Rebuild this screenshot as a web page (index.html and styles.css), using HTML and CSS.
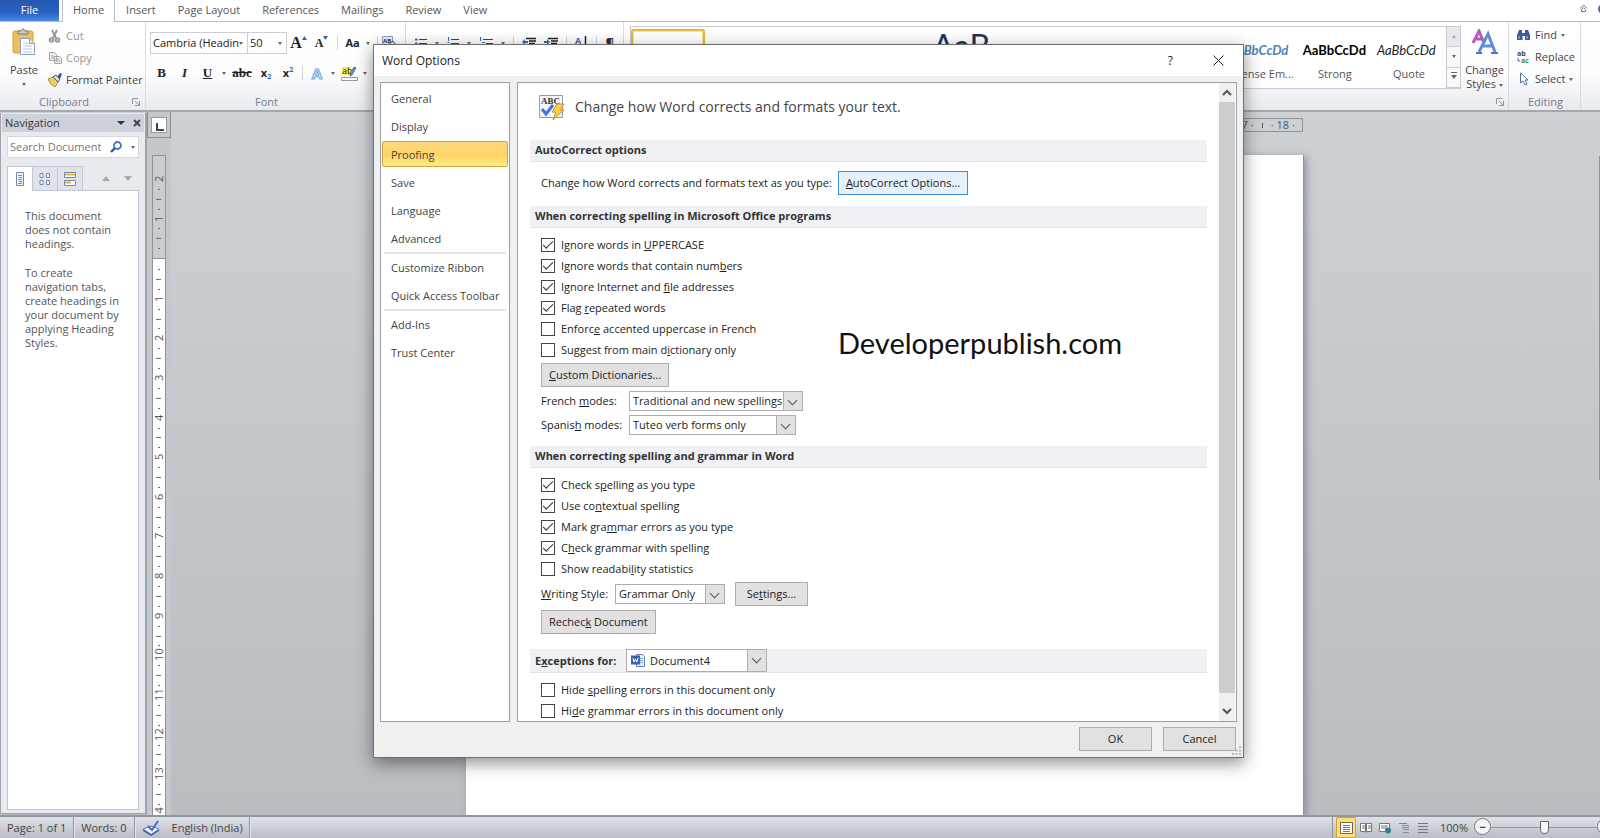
FILE: index.html
```html
<!DOCTYPE html>
<html lang="en">
<head>
  <meta charset="UTF-8">
  <title>Word Options</title>
  <link rel="stylesheet" href="styles.css">
</head>
<body>
  <div class="app">
    <nav class="tabs">
      <button class="tab file">File</button>
      <button class="tab active">Home</button>
      <button class="tab">Insert</button>
      <button class="tab">Page Layout</button>
      <button class="tab">References</button>
      <button class="tab">Mailings</button>
      <button class="tab">Review</button>
      <button class="tab">View</button>
      <span class="tabs-end">
        <svg width="9" height="9" viewBox="0 0 9 9" fill="none" stroke="#777"><path d="M1 4.500 4.500 1 8 4.500M2.500 7.500v-2l2-2 2 2v2z"/></svg>
        <svg width="2" height="10" viewBox="0 0 2 10"><circle cx="5" cy="5" r="5" fill="#4a6fb5"/></svg>
      </span>
    </nav>

    <div class="ribbon">
      <section class="group clipboard">
        <div class="group-body">
          <button class="paste">
            <svg width="24" height="28" viewBox="0 0 24 28"><rect x="1" y="3" width="20" height="22" rx="2" fill="#f0bd5e" stroke="#d09a3c"/><path d="M6 6V3h3q2-4 4 0h3v3z" fill="#c3cad3" stroke="#6e7885"/><path d="M8.500 10.500h9l5 5v11h-14z" fill="#fff" stroke="#8aa0bf"/><path d="M17.500 10.500v5h5" fill="#dbe6f4" stroke="#8aa0bf"/><path d="M11 15h5M11 18h9M11 21h9M11 24h9" stroke="#b4c6de"/></svg>
            <span>Paste</span>
            <i class="arrow"></i>
          </button>
          <div class="stack">
            <button class="cmd off"><svg width="14" height="14" viewBox="0 0 14 14" fill="none" stroke="#9a9a9a" stroke-width="2"><path d="M4 1l4 8M9 1L5 9"/><circle cx="3.500" cy="11" r="1.800"/><circle cx="9.500" cy="11" r="1.800"/></svg>Cut</button>
            <button class="cmd off"><svg width="14" height="14" viewBox="0 0 14 14" fill="#eee" stroke="#a5a5a5"><path d="M1.500 1.500h5l2 2v6h-7zM6.500 5.500h5l2 2v5h-7z"/><path d="M3 5h3M3 7h3M8 8h3M8 10h4"/></svg>Copy</button>
            <button class="cmd"><svg width="14" height="14" viewBox="0 0 14 14"><path d="M0 6l6-2 4 5-3 5q-5-2-7-8z" fill="#efcf62" stroke="#b58f2c"/><path d="M5 4l3-2 4 4-2 3z" fill="#ddd" stroke="#555"/><path d="M9 4l3-4 2 1-2 5z" fill="#43529a"/></svg>Format Painter</button>
          </div>
        </div>
        <footer>Clipboard<svg class="launcher" width="8" height="8" viewBox="0 0 8 8" fill="none" stroke="#8d9199"><path d="M.5 6V.5H6M3 3l4 4M7.500 3v4.500H3"/></svg></footer>
      </section>

      <section class="group font">
        <div class="group-body rows">
          <div class="row">
            <span class="combo name"><input aria-label="Font" value="Cambria (Headin"><i class="arrow"></i></span>
            <span class="combo size"><input aria-label="Font size" value="50"><i class="arrow"></i></span>
            <button class="glyph serif grow">A<svg width="5" height="4" viewBox="0 0 5 4"><path d="M0 4 2.500 0 5 4z" fill="#3c64b4"/></svg></button>
            <button class="glyph serif shrink">A<svg width="5" height="4" viewBox="0 0 5 4"><path d="M0 0h5L2.500 4z" fill="#3c64b4"/></svg></button>
            <i class="sep"></i>
            <button class="glyph case">Aa <i class="arrow"></i></button>
            <i class="sep"></i>
            <button class="glyph" aria-label="Clear Formatting"><svg width="14" height="14" viewBox="0 0 14 14"><path d="M.5.5h10v8H.5z" fill="#e8eefa" stroke="#8a9cc4"/><text x="1" y="7" font-size="6" font-weight="bold" fill="#333">AB</text><path d="M6 9l5-4 3 4-5 4z" fill="#dfe4ef" stroke="#556"/></svg></button>
          </div>
          <div class="row second">
            <button class="glyph serif">B</button>
            <button class="glyph serif"><em>I</em></button>
            <button class="glyph serif"><u>U</u></button>
            <i class="arrow"></i>
            <button class="glyph serif strike"><s>abc</s></button>
            <button class="glyph script">x<sub>2</sub></button>
            <button class="glyph script">x<sup>2</sup></button>
            <i class="sep"></i>
            <button class="glyph effect">A</button>
            <i class="arrow"></i>
            <button class="glyph" aria-label="Highlight"><svg width="17" height="17" viewBox="0 0 17 17"><path d="M1 2h9v8H1z" fill="#f5ee5a"/><text x="1" y="9" font-size="9" fill="#222">ab</text><path d="M9 8l4-6 2 1-4 7-2 1z" fill="#6d8fc6" stroke="#3c5488" stroke-width=".7"/><path d="M.5 12.500h16v3H.5z" fill="#fff" stroke="#999"/></svg></button>
            <i class="arrow"></i>
          </div>
        </div>
        <footer>Font</footer>
      </section>

      <section class="group paragraph">
        <div class="row">
          <svg width="12" height="13" viewBox="0 0 12 13"><path d="M4 2.500h8M4 6.500h8M4 10.500h8" stroke="#444"/><path d="M0 1.500h2.500v2H0zM0 5.500h2.500v2H0zM0 9.500h2.500v2H0z" fill="#3c64b4"/></svg>
          <i class="arrow"></i>
          <svg width="12" height="13" viewBox="0 0 12 13"><path d="M4 2.500h8M4 6.500h8M4 10.500h8" stroke="#444"/><path d="M1.500 0v4M.5 5.500h2M.5 9.500h2" stroke="#3c64b4"/></svg>
          <i class="arrow"></i>
          <svg width="14" height="13" viewBox="0 0 14 13"><path d="M4 2.500h10M7 6.500h7M9 10.500h5" stroke="#444"/><path d="M1.500 0v4M3 5.500h3M5 9.500h2" stroke="#3c64b4"/></svg>
          <i class="arrow"></i>
          <i class="sep"></i>
          <svg width="14" height="13" viewBox="0 0 14 13"><path d="M4 1.500h10M7 4h7M7 6.500h6M4 9.500h10" stroke="#222" stroke-width="1.500"/><path d="M0 5l3-3v2h3v2H3v2z" fill="#3c64b4"/></svg>
          <svg width="14" height="13" viewBox="0 0 14 13"><path d="M4 1.500h10M7 4h7M7 6.500h6M4 9.500h10" stroke="#222" stroke-width="1.500"/><path d="M6 5L3 2v2H0v2h3v2z" fill="#3c64b4"/></svg>
          <i class="sep"></i>
          <svg width="13" height="14" viewBox="0 0 13 14"><text x="0" y="8" font-size="9" font-weight="bold" fill="#3c64b4">A</text><path d="M10.500 0v12" stroke="#222" stroke-width="1.500"/></svg>
          <i class="sep"></i>
          <span class="pilcrow">¶</span>
        </div>
      </section>

      <section class="group styles">
        <div class="styles-body">
          <div class="gallery">
            <button class="style selected">AaBbCcDd</button>
            <button class="style">AaBbCcDd</button>
            <button class="style h1">AaBbC</button>
            <button class="style h2">AaBbCc</button>
            <button class="style title">AaB</button>
            <button class="style sub">AaBbCc</button>
            <button class="style it">AaBbCcDd</button>
            <button class="style it">AaBbCcDd</button>
            <button class="style intense">AaBbCcDd<span>Intense Em...</span></button>
            <button class="style strong">AaBbCcDd<span>Strong</span></button>
            <button class="style it">AaBbCcDd<span>Quote</span></button>
            <div class="gallery-nav">
              <button class="dim" aria-label="Up"><i class="arrow up"></i></button>
              <button aria-label="Down"><i class="arrow"></i></button>
              <button aria-label="More"><i class="arrow bar"></i></button>
            </div>
          </div>
          <button class="change">
            <svg width="27" height="26" viewBox="0 0 27 26" fill="none"><path d="M2 14L8 2l5 12M4 10h7" stroke="#b65cc0" stroke-width="3"/><path d="M8 23L17 5l7 18M12 17h10" stroke="#5b8edb" stroke-width="3"/><path d="M5 24h6M20 24h7" stroke="#4678c8" stroke-width="2"/></svg>
            <span>Change<br>Styles <i class="arrow"></i></span>
          </button>
        </div>
        <footer><svg class="launcher" width="8" height="8" viewBox="0 0 8 8" fill="none" stroke="#8d9199"><path d="M.5 6V.5H6M3 3l4 4M7.500 3v4.500H3"/></svg></footer>
      </section>

      <section class="group editing">
        <div class="stack">
          <button class="cmd"><svg width="14" height="14" viewBox="0 0 14 14"><path d="M2 2h3v3h3V2h3l2 5v5H8V8H5.500v4H0V7z" fill="#3d5a9e"/><path d="M2 8v3M10 8v3" stroke="#a9bce2"/></svg>Find <i class="arrow"></i></button>
          <button class="cmd"><svg width="14" height="14" viewBox="0 0 14 14"><text x="0" y="6" font-size="7" font-weight="bold" fill="#444">ab</text><text x="4" y="13" font-size="7" font-weight="bold" fill="#2e9440">ac</text><path d="M1 8v3h2" fill="none" stroke="#3c64b4"/></svg>Replace</button>
          <button class="cmd"><svg width="14" height="14" viewBox="0 0 14 14"><path d="M3.500 1v10l2.500-2 2 4 2-1-2-4h3z" fill="#fff" stroke="#56709c"/></svg>Select <i class="arrow"></i></button>
        </div>
        <footer>Editing</footer>
      </section>
    </div>

    <main class="work">
      <aside class="nav-pane">
        <header>Navigation <i class="arrow big"></i><svg width="8" height="8" viewBox="0 0 8 8" stroke="#444" stroke-width="2"><path d="M1 1l6 6M7 1L1 7"/></svg></header>
        <div class="search">
          <input type="text" aria-label="Search Document" placeholder="Search Document">
          <svg width="12" height="12" viewBox="0 0 12 12" fill="none"><circle cx="7.500" cy="4.500" r="3.500" stroke="#3f76c4" stroke-width="1.800"/><path d="M5 7L1 11" stroke="#2c5aa8" stroke-width="2.400"/></svg>
          <i class="arrow"></i>
        </div>
        <div class="nav-tabs">
          <button class="on" aria-label="Headings"><svg width="10" height="14" viewBox="0 0 10 14"><path d="M1.500.5h7v13h-7z" fill="#eef3fa" stroke="#7389ad"/><path d="M3 3.500h4M4 5.500h3M3 7.500h4M4 9.500h3M3 11.500h4" stroke="#7389ad"/></svg></button>
          <button aria-label="Pages"><svg width="12" height="12" viewBox="0 0 12 12" fill="#f7f9fc" stroke="#7389ad"><path d="M1 .5h3v4H1zM7.500.5h3v4h-3zM1 7.500h3v4H1zM7.500 7.500h3v4h-3z"/></svg></button>
          <button aria-label="Results"><svg width="12" height="14" viewBox="0 0 12 14"><path d="M.5.5h11v5H.5zM.5 8.500h11v5H.5z" fill="#fff" stroke="#7389ad"/><path d="M1 1.500h10v2H1zM1 9.500h6v2H1z" fill="#f0ad2c"/></svg></button>
          <span class="updown"><i class="arrow up wide"></i><i class="arrow wide"></i></span>
        </div>
        <div class="nav-text">
          <p>This document does not contain headings.</p>
          <p>To create navigation tabs, create headings in your document by applying Heading Styles.</p>
        </div>
      </aside>
      <div class="v-ruler">
        <div class="corner"><span></span></div>
        <div class="scale margin" data-marks="2 . - . 1 . - ."></div>
        <div class="scale body"></div>
      </div>
      <div class="canvas">
        <div class="h-ruler"><span>17</span><span>·</span><i></i><span>·</span><span>18</span><span>·</span></div>
        <div class="page"></div>
      </div>
      <div class="v-scroll"></div>
    </main>

    <footer class="status">
      <span class="cell">Page: 1 of 1</span>
      <span class="cell">Words: 0</span>
      <span class="cell lang"><svg width="18" height="16" viewBox="0 0 18 16"><path d="M1 9l8-3 8 3-7 6z" fill="#f4f6fa" stroke="#5a78b8"/><path d="M1 10l8 5 8-5" fill="none" stroke="#3f66b4" stroke-width="1.500"/><path d="M6 6l4 4 6-9" fill="none" stroke="#3f6ccc" stroke-width="2"/></svg>English (India)</span>
      <div class="views">
        <button class="on" aria-label="Print Layout"><svg width="13" height="12" viewBox="0 0 13 12"><path d="M.5.5h12v11H.5z" fill="#fff" stroke="#666"/><path d="M3 3.500h7M3 5.500h7M3 7.500h7M3 9.500h7" stroke="#777"/></svg></button>
        <button aria-label="Full Screen Reading"><svg width="12" height="12" viewBox="0 0 12 12"><path d="M.5 1.500h5v8h-5zM6.500 1.500h5v8h-5z" fill="#fff" stroke="#777"/><path d="M2 4h3M2 6h3M8 4h3M8 6h3M6 1v10" stroke="#777"/></svg></button>
        <button aria-label="Web Layout"><svg width="12" height="12" viewBox="0 0 12 12"><path d="M.5 1.500h10v8H.5z" fill="#fff" stroke="#777"/><path d="M2 4h7M2 6h6" stroke="#777"/><circle cx="9" cy="8.500" r="3" fill="#2f7d9c"/></svg></button>
        <button aria-label="Outline"><svg width="12" height="12" viewBox="0 0 12 12" stroke="#888"><path d="M1 1.500h8M4 3.500h7M4 5.500h7M5 7.500h6M5 10.500h6"/></svg></button>
        <button aria-label="Draft"><svg width="12" height="12" viewBox="0 0 12 12" stroke="#777"><path d="M1 1.500h10M1 4.500h10M1 7.500h10M1 10.500h10"/></svg></button>
      </div>
      <span class="percent">100%</span>
      <button class="zoom-btn" aria-label="Zoom out">−</button>
      <input class="zoom" type="range" aria-label="Zoom" min="0" max="100" value="50">
      <button class="zoom-btn last" aria-label="Zoom in"></button>
    </footer>
  </div>

  <div class="dialog" role="dialog" aria-label="Word Options">
    <header class="dialog-title">
      <span>Word Options</span>
      <button class="help" aria-label="Help">?</button>
      <button aria-label="Close"><svg width="11" height="11" viewBox="0 0 11 11" stroke="#222"><path d="M.5.5l10 10M10.500.5l-10 10"/></svg></button>
    </header>
    <div class="dialog-main">
      <ul class="pages">
        <li><a href="#">General</a></li>
        <li><a href="#">Display</a></li>
        <li><a href="#" class="current">Proofing</a></li>
        <li><a href="#">Save</a></li>
        <li><a href="#">Language</a></li>
        <li><a href="#">Advanced</a></li>
        <li class="split"><a href="#">Customize Ribbon</a></li>
        <li><a href="#">Quick Access Toolbar</a></li>
        <li class="split"><a href="#">Add-Ins</a></li>
        <li><a href="#">Trust Center</a></li>
      </ul>
      <div class="pane">
        <div class="options">
          <h1>
            <svg width="26" height="27" viewBox="0 0 26 27"><path d="M.5 1.500h23v22H.5z" fill="#f3f6fb" stroke="#8b9db8"/><text class="abc" x="2" y="10" font-size="9" font-weight="bold" fill="#333">ABC</text><path d="M3 15l4 5 7-9" fill="none" stroke="#3f78dd" stroke-width="3"/><path d="M18 10h7l-4 6h4L14 26l3-8h-4z" fill="#fcd14b" stroke="#c8922a"/></svg>
            Change how Word corrects and formats your text.
          </h1>

          <h2>AutoCorrect options</h2>
          <div class="line auto">
            <span>Change how Word corrects and formats text as you type:</span>
            <button class="btn focus"><u>A</u>utoCorrect Options...</button>
          </div>

          <h2>When correcting spelling in Microsoft Office programs</h2>
          <div class="checks">
            <label><input type="checkbox" checked><span>Ignore words in <u>U</u>PPERCASE</span></label>
            <label><input type="checkbox" checked><span>Ignore words that contain num<u>b</u>ers</span></label>
            <label><input type="checkbox" checked><span>Ignore Internet and <u>f</u>ile addresses</span></label>
            <label><input type="checkbox" checked><span>Flag <u>r</u>epeated words</span></label>
            <label><input type="checkbox"><span>Enforc<u>e</u> accented uppercase in French</span></label>
            <label><input type="checkbox"><span>Suggest from main d<u>i</u>ctionary only</span></label>
          </div>
          <div class="line"><button class="btn"><u>C</u>ustom Dictionaries...</button></div>
          <div class="line mode">
            <label for="french">French <u>m</u>odes:</label>
            <span class="select french"><select id="french"><option>Traditional and new spellings</option></select></span>
          </div>
          <div class="line mode">
            <label for="spanish">Spanis<u>h</u> modes:</label>
            <span class="select spanish"><select id="spanish"><option>Tuteo verb forms only</option></select></span>
          </div>

          <h2 class="after-modes">When correcting spelling and grammar in Word</h2>
          <div class="checks">
            <label><input type="checkbox" checked><span>Check s<u>p</u>elling as you type</span></label>
            <label><input type="checkbox" checked><span>Use co<u>n</u>textual spelling</span></label>
            <label><input type="checkbox" checked><span>Mark gra<u>m</u>mar errors as you type</span></label>
            <label><input type="checkbox" checked><span>C<u>h</u>eck grammar with spelling</span></label>
            <label><input type="checkbox"><span>Show readabi<u>l</u>ity statistics</span></label>
          </div>
          <div class="line writing">
            <label for="writing"><u>W</u>riting Style:</label>
            <span class="select grammar"><select id="writing"><option>Grammar Only</option></select></span>
            <button class="btn settings">Se<u>t</u>tings...</button>
          </div>
          <div class="line"><button class="btn">Rechec<u>k</u> Document</button></div>

          <h2 class="exceptions">
            <label for="doc">E<u>x</u>ceptions for:</label>
            <span class="select doc"><svg width="14" height="14" viewBox="0 0 14 14"><path d="M5.500.5h6l2 2v10h-8z" fill="#e6eefb" stroke="#5b83c4"/><path d="M8 4.500h4M8 6.500h4M8 8.500h4" stroke="#7fa0d6"/><path d="M0 1.500h9v9H0z" fill="#3b62ae"/><path d="M2 4l1 4 1.500-3L6 8l1-4" fill="none" stroke="#fff"/></svg><select id="doc"><option>Document4</option></select></span>
          </h2>
          <div class="checks last">
            <label><input type="checkbox"><span>Hide <u>s</u>pelling errors in this document only</span></label>
            <label><input type="checkbox"><span>Hi<u>d</u>e grammar errors in this document only</span></label>
          </div>
        </div>
        <div class="scrollbar">
          <svg width="10" height="7" viewBox="0 0 10 7" fill="none" stroke="#555" stroke-width="2"><path d="M1 6l4-4 4 4"/></svg>
          <div class="thumb"></div>
          <svg width="10" height="7" viewBox="0 0 10 7" fill="none" stroke="#555" stroke-width="2"><path d="M1 1l4 4 4-4"/></svg>
        </div>
        <div class="brand">Developerpublish.com</div>
      </div>
    </div>
    <div class="dialog-buttons">
      <button class="btn">OK</button>
      <button class="btn">Cancel</button>
    </div>
    <svg class="grip" width="10" height="10" viewBox="0 0 10 10" fill="#bbb"><path d="M7 0h2v2H7zM7 3.500h2v2H7zM3.500 3.500h2v2h-2zM7 7h2v2H7zM3.500 7h2v2h-2zM0 7h2v2H0z"/></svg>
  </div>

  <script>
    // Ruler marks: dot, dash, dot, number for every centimetre
    function drawMarks(scale, marks) {
      marks.forEach(mark => {
        const el = document.createElement('span');
        if (mark === '.') el.className = 'dot';
        else if (mark === '-') el.className = 'dash';
        else el.textContent = mark;
        scale.appendChild(el);
      });
    }

    const margin = document.querySelector('.scale.margin');
    drawMarks(margin, margin.dataset.marks.split(' '));

    const marks = [];
    for (let cm = 1; cm <= 14; cm++) marks.push('.', '-', '.', String(cm));
    drawMarks(document.querySelector('.scale.body'), marks);
  </script>
</body>
</html>
```
FILE: styles.css
```css
* { box-sizing: border-box; }
html, body {
  height: 100%;
  margin: 0;
}
body {
  font-family: "Open Sans", "Noto Sans", sans-serif;
  font-size: 11px;
  line-height: 14px;
  color: #444;
  overflow: hidden;
}
button, input, select {
  font: inherit;
  color: inherit;
  margin: 0;
  padding: 0;
  border: 0;
  background: none;
}
svg { flex: none; }
svg text { font-family: "Open Sans", sans-serif; }
svg .abc { font-family: "Liberation Serif", serif; }
.app {
  height: 100vh;
  display: grid;
  grid-template-rows: 22px 90px 1fr 23px;
}

/* small triangles */
.arrow {
  flex: none;
  display: inline-block;
  border: 2px solid transparent;
  border-top: 3px solid #666;
  border-bottom: 0;
  vertical-align: middle;
}
.arrow.up { border-top: 0; border-bottom: 3px solid #aaa; }
.arrow.big { border-width: 4px 4px 0; border-top-color: #333; }
.arrow.wide { border-width: 5px 4px 0; border-top-color: #a5a8ad; }
.arrow.up.wide { border-width: 0 4px 5px; border-bottom-color: #a5a8ad; }
.arrow.bar { position: relative; border-width: 4px 3px 0; }
.arrow.bar::before { content: ""; position: absolute; left: -3px; top: -7px; width: 6px; height: 1px; background: #666; }

/* tabs */
.tabs {
  display: flex;
  align-items: stretch;
  background: #fff;
  border-bottom: 1px solid #b9bcc6;
}
.tab { padding: 0 11px 2px; color: #555; }
.tab.file { width: 59px; margin-right: 3px; background: linear-gradient(#2457b0, #2a62c2 60%, #4a8ae0); color: #fff; }
.tab.active { background: #fff; border: 1px solid #b9bcc6; border-width: 0 1px; margin-bottom: -1px; padding: 0 10px 3px; }
.tabs-end { margin-left: auto; display: flex; align-items: center; gap: 10px; padding-bottom: 4px; }

/* ribbon */
.ribbon {
  display: flex;
  background: linear-gradient(#fff, #fdfdfe 55%, #e8ebef);
  border-bottom: 2px solid #a3a7ae;
}
.group {
  display: flex;
  flex-direction: column;
  flex: none;
  border-right: 1px solid #d8dbe0;
}
.group footer {
  margin-top: auto;
  height: 17px;
  display: flex;
  align-items: center;
  justify-content: center;
  color: #777b88;
}
.launcher { margin-left: auto; }
.row { display: flex; align-items: center; }
.sep { flex: none; width: 1px; height: 14px; background: #d0d3da; }
.clipboard { width: 146px; }
.clipboard footer { padding-left: 39px; padding-right: 5px; }
.clipboard .group-body { display: flex; }
.paste { width: 48px; padding-top: 6px; display: flex; flex-direction: column; align-items: center; }
.paste span { margin: 7px 0 6px; }
.stack { display: flex; flex-direction: column; padding-top: 3px; }
.cmd { display: flex; align-items: center; gap: 4px; height: 22px; white-space: nowrap; }
.off { color: #999; }

.font { width: 260px; padding-left: 4px; }
.font footer { padding-right: 22px; }
.rows { padding-top: 10px; }
.combo { display: flex; align-items: center; height: 22px; border: 1px solid #ccced6; background: #fff; padding: 0 4px 0 2px; color: #222; }
.combo input { width: 100%; min-width: 0; }
.combo.name { width: 98px; }
.combo.size { width: 40px; margin-left: -1px; }
.glyph { display: flex; align-items: center; justify-content: center; color: #222; }
.serif { font-family: "Liberation Serif", serif; font-weight: bold; font-size: 13px; }
.grow, .shrink { align-items: flex-start; width: 23px; }
.grow { font-size: 16px; }
.shrink { font-size: 12px; }
.case { font-weight: bold; gap: 6px; width: 31px; }
.font .row:first-child .sep { margin: 0 4px; }
.second { height: 22px; margin-top: 8px; }
.second .glyph { width: 22px; }
.second .serif { width: 23px; }
.second .strike { width: 26px; }
.second .arrow, .second .sep { margin: 0 3px; }
.script { font-weight: bold; }
.script sub, .script sup { font-size: 7px; color: #3c64b4; line-height: 1; }
.script sub { align-self: flex-end; }
.script sup { align-self: flex-start; }
.second .effect { color: #cfe6f7; -webkit-text-stroke: 1px #74acd8; font-size: 15px; font-weight: bold; }

.paragraph { width: 218px; padding: 14px 9px 0; }
.paragraph .row { justify-content: space-between; }
.pilcrow { font-weight: bold; color: #333; font-size: 13px; }

.styles { flex: 1; min-width: 0; }
.styles-body { display: flex; padding: 4px 0 0 6px; }
.gallery { flex: 1; min-width: 0; display: flex; height: 63px; border: 1px solid #c8cbd4; background: #fff; border-right: 0; overflow: hidden; }
.style {
  flex: 1 1 74px;
  min-width: 0;
  padding: 10px 5px 0;
  display: flex;
  flex-direction: column;
  align-items: flex-start;
  justify-content: flex-start;
  overflow: hidden;
  white-space: nowrap;
  font-family: Lato, sans-serif;
  font-size: 13px;
  line-height: 26px;
  color: #222;
}
.style span { align-self: center; font: 11px/22px "Open Sans", sans-serif; color: #555; }
.style.selected { margin-top: 2px; border: 2px solid #e9b840; border-radius: 2px; box-shadow: inset 0 0 0 1px #ffe48c; }
.style.h1, .style.h2, .style.sub { color: #3a6ea8; font-size: 15px; font-weight: bold; }
.style.title { padding-top: 6px; color: #17365d; font-size: 32px; }
.style.it { font-style: italic; }
.style.intense { color: #4f81bd; font-weight: bold; font-style: italic; }
.style.strong { color: #000; font-weight: bold; }
.gallery-nav { width: 15px; flex: none; display: flex; flex-direction: column; }
.gallery-nav button { flex: 1; border: 1px solid #c8cbd4; border-top: 0; background: #f7f8fa; display: flex; align-items: center; justify-content: center; }
.gallery-nav .dim { background: #e6e8ec; }
.change { width: 47px; flex: none; display: flex; flex-direction: column; align-items: center; padding-top: 3px; }
.change span { margin-top: 8px; }
.styles footer { padding-right: 4px; }

.editing { width: 72px; margin-right: 19px; padding-left: 8px; }
.editing .stack { padding-top: 2px; }
.editing footer { padding-right: 6px; }

/* workspace */
.work {
  display: flex;
  min-height: 0;
  background: linear-gradient(#cdd1d6, #b9bcc1);
  overflow: hidden;
}
.nav-pane {
  width: 147px;
  flex: none;
  margin: 1px 0;
  padding: 1px 6px 3px;
  display: flex;
  flex-direction: column;
  background: #e7ebf0;
  border: 1px solid #9fa4ab;
  border-width: 0 2px 1px 1px;
}
.nav-pane header { display: flex; align-items: center; gap: 8px; height: 18px; margin: 0 -5px; padding: 0 3px; background: #cdd2da; color: #333; }
.nav-pane header .arrow { margin-left: auto; }
.search { display: flex; align-items: center; gap: 9px; height: 22px; margin-top: 4px; padding: 0 3px 0 2px; background: #fff; border: 1px solid #d4d8de; }
.search input { flex: 1; min-width: 0; }
.search input::placeholder { color: #777; }
.nav-tabs { display: flex; margin-top: 8px; height: 25px; }
.nav-tabs button { flex: none; width: 25px; display: flex; align-items: center; justify-content: center; border: 1px solid #c3c8d0; border-left: 0; background: #dfe4eb; }
.nav-tabs .on { width: 26px; background: #fff; border-bottom: 0; border-left: 1px solid #c3c8d0; }
.updown { flex: 1; display: flex; align-items: center; justify-content: center; gap: 14px; padding-left: 12px; border-bottom: 1px solid #c3c8d0; }
.nav-text { flex: 1; background: #fff; border: 1px solid #c3c8d0; border-top: 0; padding: 18px 17px; }
.nav-text p { margin: 0 0 15px; color: #555; }

.v-ruler { width: 24px; flex: none; display: flex; flex-direction: column; align-items: center; background: #c4c8cd; color: #555; }
.corner { flex: none; width: 100%; height: 26px; margin-bottom: 17px; border: 1px solid #888c93; border-top: 0; display: grid; place-items: center; }
.corner span { width: 16px; height: 16px; background: #fff; border: 1px solid #999; }
.corner span::before { content: ""; display: block; width: 6px; height: 6px; margin: 5px 4px; border: solid #444; border-width: 0 0 2px 2px; }
.scale { width: 14px; display: flex; flex-direction: column; border: 1px solid #8e9299; }
.scale.margin { flex: none; height: 104px; padding: 18px 0 5px; background: #c9cdd2; }
.scale.body { flex: 1; min-height: 0; margin-bottom: -5px; padding-top: 5px; background: #fff; border-top: 0; }
.scale > span { flex: 1 1 0; min-height: 0; display: flex; align-items: center; justify-content: center; writing-mode: vertical-rl; transform: rotate(180deg); line-height: 12px; }
.dot::before { content: ""; width: 2px; height: 1px; background: #666; }
.dash::before { content: ""; width: 5px; height: 1px; background: #666; }

.canvas { flex: 1; display: flex; flex-direction: column; align-items: stretch; padding: 6px 296px 0 295px; }
.h-ruler { flex: none; height: 14px; display: flex; align-items: center; justify-content: flex-end; gap: 3px; padding-right: 7px; border: 1px solid #8e9299; color: #555; }
.h-ruler i { width: 1px; height: 5px; margin: 0 5px; background: #555; }
.page { flex: 1; margin-top: 23px; background: #fff; box-shadow: 1px 0 0 #8f949b, 3px 2px 8px #888c92; }
.v-scroll { width: 1px; background: #8e9299; margin-top: 44px; margin-bottom: 335px; }

/* status bar */
.status {
  display: flex;
  align-items: stretch;
  border-top: 2px solid #9197a0;
  background: linear-gradient(#dfe2e6, #b9bdc4);
  overflow: hidden;
}
.cell { display: flex; align-items: center; padding: 0 7px; border-right: 1px solid #8e939a; box-shadow: 1px 0 0 #e4e6ea; }
.lang { gap: 12px; padding-right: 6px; }
.views { margin-left: auto; padding-left: 3px; border-left: 1px solid #8e939a; display: flex; }
.views button { width: 19px; display: grid; place-items: center; }
.views .on { width: 20px; border: 1px solid #d3a03a; border-radius: 2px; background: #ffe06e; }
.percent { margin: 4px 6px 0 8px; }
.zoom-btn { flex: none; width: 17px; height: 17px; margin-top: 1px; border: 1px solid #777; border-radius: 50%; background: #f2f3f5; line-height: 13px; font-weight: bold; }
.zoom-btn.last { margin-right: -14px; }
.zoom { width: 106px; appearance: none; background: linear-gradient(#8f959d, #8f959d) center / 100% 1px no-repeat; }
.zoom::-webkit-slider-thumb { appearance: none; width: 9px; height: 13px; border: 1px solid #666; border-radius: 1px 1px 5px 5px; background: #f5f6f8; }

/* dialog */
.dialog {
  position: absolute;
  left: 373px;
  top: 44px;
  width: 871px;
  background: #f0f0f0;
  border: 1px solid #6e6e6e;
  box-shadow: 0 5px 16px rgba(0, 0, 0, .45);
  color: #222;
}
.dialog-title { display: flex; align-items: center; height: 31px; padding: 0 19px 0 8px; background: #fff; font-size: 12px; }
.dialog-title span { margin-right: auto; }
.dialog-title button { display: flex; margin-left: 40px; }
.dialog-main { display: flex; gap: 7px; padding: 6px 6px 0; }
.pages { flex: none; width: 130px; margin: 0; padding: 2px 1px; list-style: none; background: #fff; border: 1px solid #9a9fa8; }
.pages li { padding-bottom: 2px; }
.pages a { display: block; height: 26px; padding: 6px 8px 4px; border: 1px solid transparent; color: #444; text-decoration: none; white-space: nowrap; }
.pages .current { border-color: #d6a542; border-radius: 2px; background: linear-gradient(#fdd77e, #ffd365 55%, #ffef83); }
.pages .split::before { content: ""; display: block; height: 2px; margin: -1px 2px 0; background: #e2e3e5; }
.pane { position: relative; flex: 1; display: flex; background: #fff; border: 1px solid #9a9fa8; }
.options { flex: 1; padding: 0 12px; }
.options h1 { display: flex; align-items: center; gap: 10px; height: 34px; margin: 7px 0 16px; padding-left: 9px; font-size: 14px; font-weight: normal; color: #444; }
.options h2 { height: 22px; margin: 0; padding: 3px 5px; background: #eff1f5; border-bottom: 1px solid #e0e2e8; font-size: 11px; color: #333; }
.line { display: flex; align-items: center; padding-left: 11px; }
.auto { gap: 6px; padding-top: 9px; padding-bottom: 11px; }
.btn { height: 24px; padding: 0 7px; background: #e1e1e1; border: 1px solid #adadad; white-space: nowrap; }
.btn.focus { background: #e5f1fb; border-color: #3c8fd5; }
.checks { padding: 6px 0 3px 11px; }
.checks.last { padding-bottom: 0; }
.checks label { display: flex; align-items: center; gap: 6px; height: 21px; }
.checks input { appearance: none; width: 14px; height: 14px; border: 1px solid #444; background: #fff; display: grid; place-items: center; }
.checks input:checked::before { content: ""; width: 9px; height: 4px; margin-top: -3px; border: solid #333; border-width: 0 0 1px 1px; transform: rotate(-45deg); }
.mode { padding-top: 4px; }
.mode label { width: 88px; }
.select { position: relative; display: flex; height: 20px; border: 1px solid #adadad; background: #fff; color: #222; }
.select select { appearance: none; width: 100%; padding-left: 3px; }
.select::before { content: ""; position: absolute; right: 0; top: 0; bottom: 0; width: 18px; background: #e1e1e1; border-left: 1px solid #adadad; pointer-events: none; }
.select::after { content: ""; position: absolute; right: 6px; top: 5px; width: 6px; height: 6px; border: solid #555; border-width: 0 1px 1px 0; transform: rotate(45deg); pointer-events: none; }
.french select { width: auto; padding-right: 19px; }
.spanish { width: 167px; }
.grammar { width: 110px; }
.options .after-modes { margin-top: 11px; }
.writing { padding-bottom: 4px; }
.writing label { width: 74px; }
.settings { width: 73px; margin-left: 10px; }
.options .exceptions { display: flex; align-items: center; height: 24px; margin-top: 15px; padding: 0 5px; }
.exceptions label { width: 91px; }
.doc { width: 141px; height: 23px; font-weight: normal; align-items: center; padding-left: 4px; }
.doc select { padding-left: 5px; }
.scrollbar { flex: none; width: 16px; margin-right: 1px; display: flex; flex-direction: column; align-items: center; padding: 6px 0; background: #f0f0f0; }
.thumb { flex: 1; width: 100%; margin: 6px 0 15px; background: #cdcdcd; }
.brand { position: absolute; left: 320px; top: 242px; font: 29px/36px Lato, sans-serif; color: #111; }
.dialog-buttons { display: flex; justify-content: flex-end; gap: 11px; padding: 5px 7px 6px; }
.dialog-buttons .btn { width: 73px; }
.grip { position: absolute; right: 1px; bottom: 1px; }
```
